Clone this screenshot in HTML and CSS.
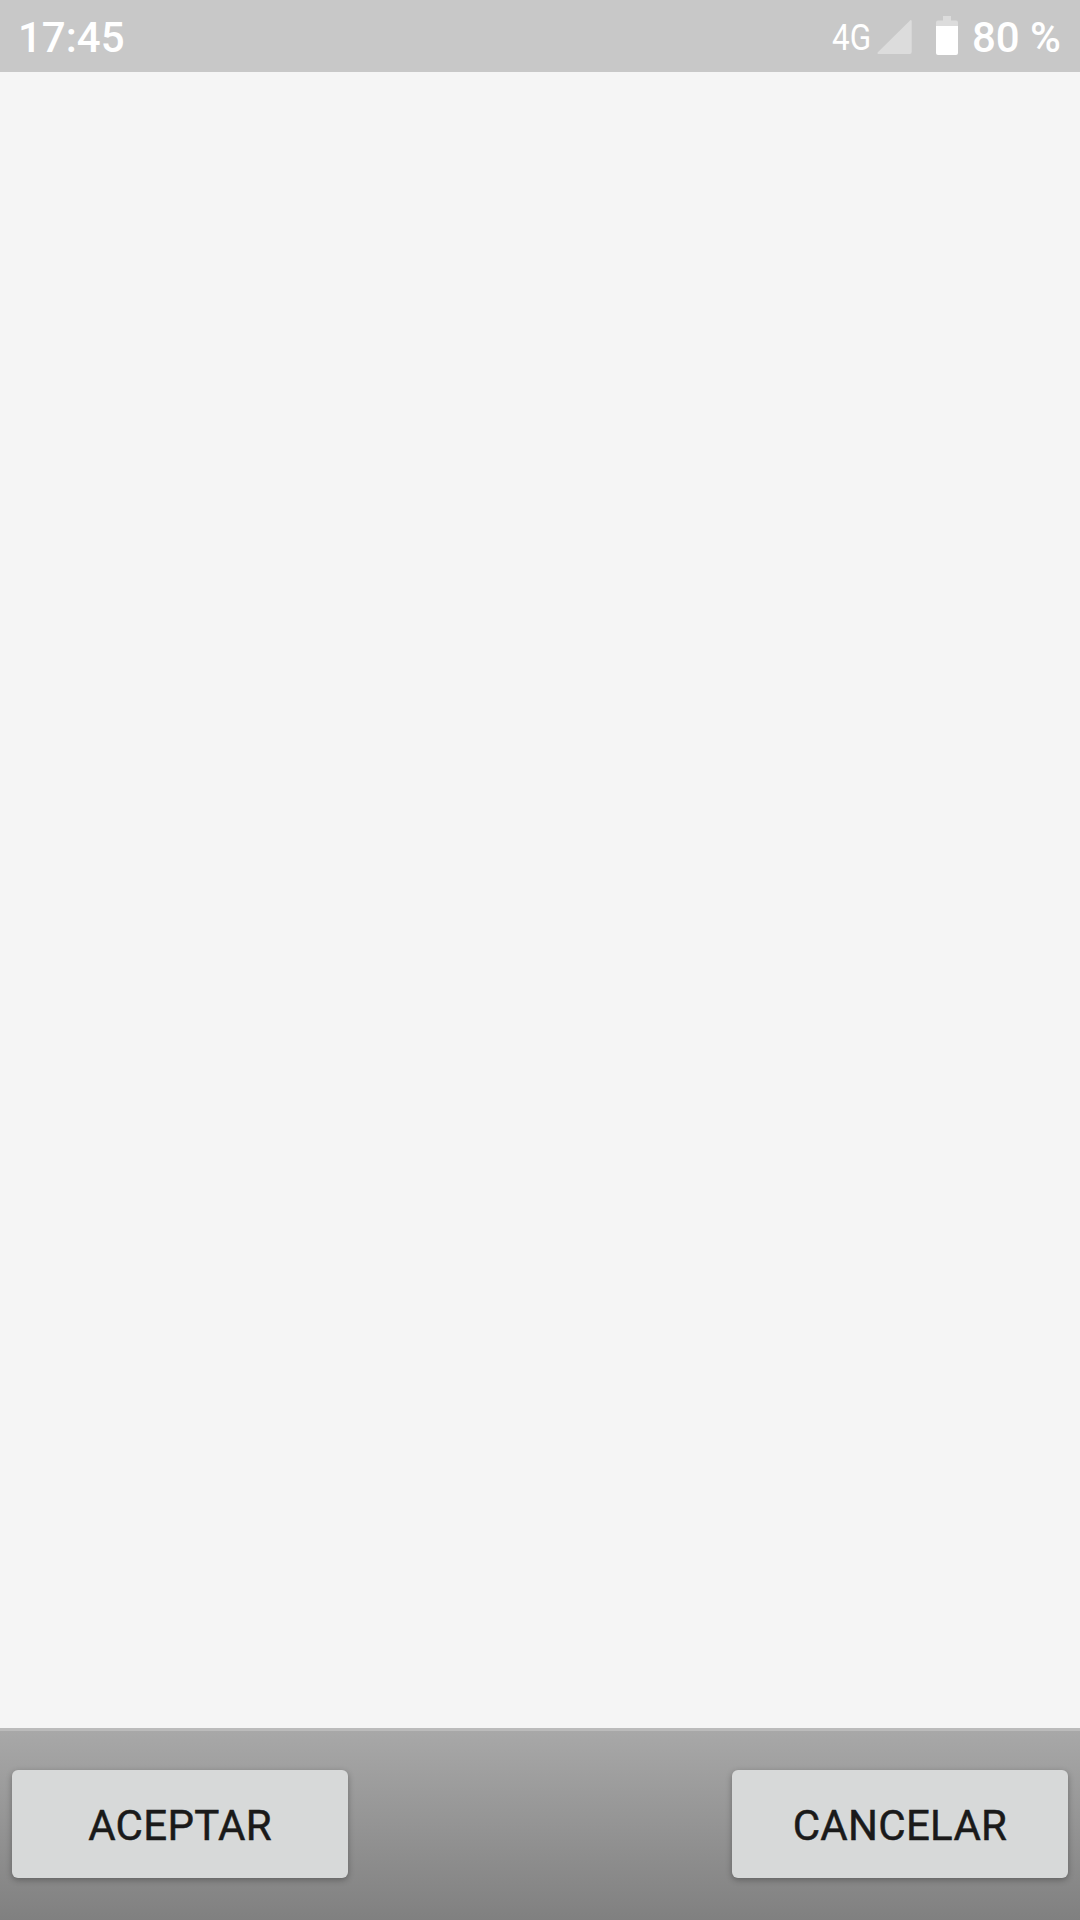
FILE: index.html
```
<!DOCTYPE html>
<html lang="es">
<head>
<meta charset="utf-8">
<title>Pantalla</title>
<link rel="stylesheet" href="styles.css">
</head>
<body>
<div class="screen">
  <header class="status">
    <span class="time">17:45</span>
    <div class="indicators">
      <span class="network">4G</span>
      <svg class="signal" width="36" height="36" viewBox="0 0 36 36"><path d="M1.500 35a1 1 0 0 1-.7-1.700L33 1.400a1 1 0 0 1 1.700.7V33a2 2 0 0 1-2 2z" fill="#dcdcdc"/></svg>
      <svg class="battery" width="22" height="39" viewBox="0 0 22 39"><path d="M7 0h8v4.500h5a2 2 0 0 1 2 2V10H0V6.500a2 2 0 0 1 2-2h5z" fill="#dcdcdc"/><path d="M0 10h22v27a2 2 0 0 1-2 2H2a2 2 0 0 1-2-2z" fill="#fff"/></svg>
      <span class="level">80 %</span>
    </div>
  </header>
  <main class="content"></main>
  <footer class="actions">
    <button class="action" type="button">ACEPTAR</button>
    <button class="action" type="button">CANCELAR</button>
  </footer>
</div>
</body>
</html>
```
FILE: styles.css
```
html, body {
  margin: 0;
  padding: 0;
}
body {
  font-family: Roboto, "Liberation Sans", sans-serif;
}
.screen {
  width: 1080px;
  height: 1920px;
  display: flex;
  flex-direction: column;
  overflow: hidden;
  background: #f5f5f5;
}
.status {
  height: 72px;
  flex: none;
  display: flex;
  align-items: center;
  justify-content: space-between;
  padding: 0 19px 0 18px;
  background: #c8c8c8;
  color: #fff;
}
.time {
  padding-top: 4px;
  font-size: 42px;
  font-weight: 500;
  line-height: 72px;
}
.indicators {
  display: flex;
  align-items: center;
}
.network {
  width: 37px;
  padding-top: 4px;
  font-size: 37px;
  line-height: 72px;
  transform: scaleX(0.85);
  transform-origin: left center;
  white-space: nowrap;
}
.signal {
  margin: 2px 0 0 8px;
}
.battery {
  margin: 0 0 1px 23px;
}
.level {
  margin-left: 14px;
  padding-top: 4px;
  font-size: 42px;
  font-weight: 500;
  line-height: 72px;
}
.content {
  flex: 1;
}
.actions {
  height: 192px;
  flex: none;
  box-sizing: border-box;
  display: flex;
  justify-content: space-between;
  align-items: flex-start;
  padding: 39px 12px 0;
  border-top: 3px solid #bbb;
  background: linear-gradient(#a8a8a8, #808080);
}
.action {
  width: 336px;
  height: 108px;
  padding: 2px 0 0;
  border: 0;
  border-radius: 6px;
  background: #d7d9d9;
  box-shadow: 0 2px 6px rgba(0, 0, 0, 0.3);
  color: #1a1a1a;
  font-family: Roboto, "Liberation Sans", sans-serif;
  font-size: 42px;
  font-weight: 400;
  letter-spacing: 0.3px;
  -webkit-text-stroke: 0.5px #1a1a1a;
}
```
